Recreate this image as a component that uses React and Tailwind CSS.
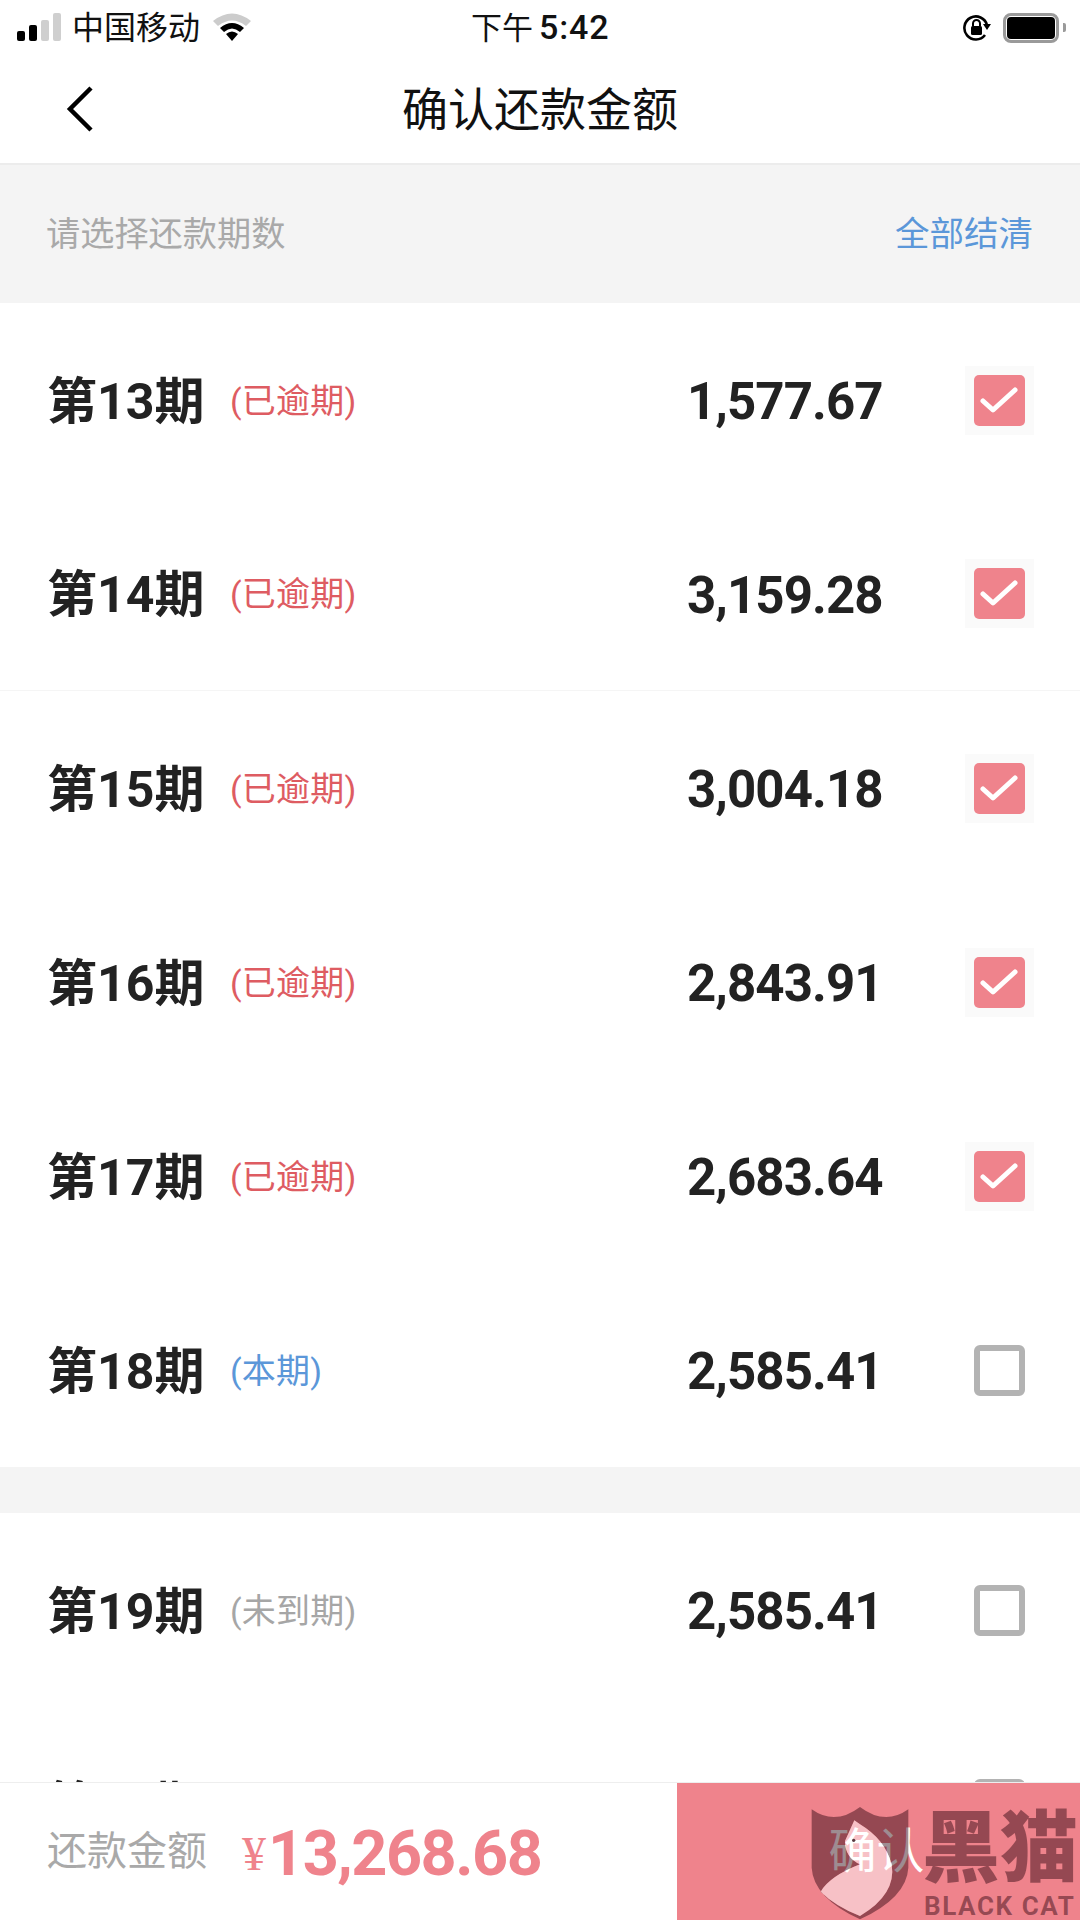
const FONT = 'font-["Roboto","Noto_Sans_CJK_SC",sans-serif]';

const rows = [
  { n: 13, tag: '(已逾期)', kind: 'late', amt: '1,577.67', on: true },
  { n: 14, tag: '(已逾期)', kind: 'late', amt: '3,159.28', on: true, line: true },
  { n: 15, tag: '(已逾期)', kind: 'late', amt: '3,004.18', on: true },
  { n: 16, tag: '(已逾期)', kind: 'late', amt: '2,843.91', on: true },
  { n: 17, tag: '(已逾期)', kind: 'late', amt: '2,683.64', on: true },
  { n: 18, tag: '(本期)', kind: 'now', amt: '2,585.41', on: false },
];
const rows2 = [
  { n: 19, tag: '(未到期)', kind: 'future', amt: '2,585.41', on: false },
  { n: 20, tag: '(未到期)', kind: 'future', amt: '2,585.41', on: false },
];

function Check({ on }) {
  if (!on) {
    return (
      <div className="w-[69px] h-[69px] flex items-center justify-center">
        <div className="w-[51px] h-[51px] rounded-[6px] border-[6px] border-[#b3b3b3] bg-white" />
      </div>
    );
  }
  return (
    <div className="w-[69px] h-[69px] flex items-center justify-center bg-[#fafafa]">
      <div className="w-[51px] h-[51px] rounded-[5px] bg-[#ef838c] flex items-center justify-center">
        <svg width="51" height="51" viewBox="0 0 51 51" fill="none">
          <path d="M9 26 L19 35 L41 15" stroke="#fff" strokeWidth="5" strokeLinecap="round" strokeLinejoin="round" />
        </svg>
      </div>
    </div>
  );
}

function Row({ r }) {
  const color = r.kind === 'late' ? 'text-[#de5c62]' : r.kind === 'now' ? 'text-[#5b97d9]' : 'text-[#a6a6a6]';
  return (
    <div className={`h-[194px] shrink-0 flex items-center pl-[47px] bg-white ${r.line ? 'border-b border-[#f5f5f5]' : ''}`}>
      <div className="w-[183px] shrink-0 mt-[3px] text-[50px] leading-none font-bold text-[#222222] whitespace-nowrap">第{r.n}期</div>
      <div className={`w-[457px] shrink-0 mt-[1px] text-[34px] leading-none ${color} whitespace-nowrap tracking-[0.2px]`}>{r.tag}</div>
      <div className="w-[278px] shrink-0 mt-[3px] text-[51px] leading-none font-bold text-[#222222] tracking-[-0.9px]">{r.amt}</div>
      <Check on={r.on} />
    </div>
  );
}

function StatusBar() {
  return (
    <div className="h-[55px] shrink-0 flex items-center justify-between bg-white relative">
      <div className="flex items-center">
        <div className="flex items-end gap-[4px] ml-[17px] h-[28px] mt-[-2px]">
          <div className="w-[8px] h-[10px] rounded-[2px] bg-black" />
          <div className="w-[8px] h-[16px] rounded-[2px] bg-black" />
          <div className="w-[8px] h-[21px] rounded-[2px] bg-[#cfcfcf]" />
          <div className="w-[8px] h-[28px] rounded-[2px] bg-[#cfcfcf]" />
        </div>
        <div className="ml-[11px] mt-[1px] text-[32px] leading-none text-[#111111]">中国移动</div>
        <svg className="ml-[12px] mt-[-2px]" width="40" height="30" viewBox="0 0 40 30">
          <path d="M1 9 Q20 -6 39 9 L34 14 Q20 3 6 14 Z" fill="#cccccc" />
          <path d="M8 16 Q20 6 32 16 L28 20 Q20 13 12 20 Z" fill="#000" />
          <path d="M14 22 Q20 17 26 22 L20 29 Z" fill="#000" />
        </svg>
      </div>
      <div className="absolute left-[471px] top-[9px] flex items-baseline leading-[36px] text-[#111111] whitespace-nowrap">
        <span className="text-[31px]">下午</span>
        <span className="ml-[6px] text-[34px] font-medium tracking-[0.9px]">5:42</span>
      </div>
      <div className="flex items-center">
        <svg className="ml-[-2px]" width="30" height="28" viewBox="0 0 30 28" fill="none">
          <path d="M23 21 A11.5 11.5 0 1 1 25 11" stroke="#000" strokeWidth="2.6" />
          <path d="M21 10 L29 10 L25 16 Z" fill="#000" />
          <rect x="9" y="12" width="11" height="9" rx="1.5" fill="#000" />
          <path d="M11 12 V9.5 A3.5 3.5 0 0 1 18 9.5 V12" stroke="#000" strokeWidth="2" />
        </svg>
        <div className="ml-[11px] w-[56px] h-[30px] rounded-[8px] border-[3px] border-[#9a9a9a] p-[1px]">
          <div className="w-full h-full rounded-[4px] bg-black" />
        </div>
        <div className="ml-[4px] mr-[14px] w-[3px] h-[9px] bg-[#9a9a9a] rounded-r-[2px]" />
      </div>
    </div>
  );
}

function Watermark() {
  return (
    <>
      <svg className="absolute left-[83px] top-[-22px]" width="320" height="160" viewBox="0 0 960 480">
        <path
          fillRule="evenodd"
          d="M155 145 Q225 195 300 138 Q375 195 445 145 L445 320 Q440 410 300 475 Q160 410 155 320 Z M283 178 L300 190 Q375 235 395 310 Q410 400 300 465 Q225 435 182 392 Q210 345 300 310 Q255 290 255 240 Z"
          fill="rgba(40,0,10,0.45)"
        />
        <path d="M283 178 L300 190 Q375 235 395 310 Q410 400 300 465 Q225 435 182 392 Q210 345 300 310 Q255 290 255 240 Z" fill="rgba(255,255,255,0.5)" />
        <circle cx="281" cy="238" r="5" fill="#5a3a40" />
      </svg>
      <div className="absolute left-[245px] top-[27px] text-[78px] leading-[80px] font-black text-[rgba(40,0,10,0.45)] whitespace-nowrap">黑猫</div>
      <div className="absolute left-[247px] top-[109px] text-[26px] leading-[28px] font-bold text-[rgba(40,0,10,0.45)] whitespace-nowrap tracking-[1.6px]">BLACK CAT</div>
    </>
  );
}

export default function App() {
  return (
    <div className={`w-[1080px] h-[1920px] flex flex-col overflow-hidden bg-white ${FONT}`}>
      <StatusBar />
      <div className="h-[110px] shrink-0 relative flex items-center justify-center border-b-2 border-[#ececec]">
        <svg className="absolute left-[64px] top-[30px]" width="32" height="48" viewBox="0 0 32 48" fill="none">
          <path d="M27 3 L6 24 L27 45" stroke="#000" strokeWidth="4.5" />
        </svg>
        <div className="mt-[2px] text-[46px] leading-none text-[#111111]">确认还款金额</div>
      </div>
      <div className="h-[138px] shrink-0 bg-[#f4f4f4] flex items-center justify-between pl-[46px] pr-[47px]">
        <div className="text-[34.2px] leading-none text-[#a9a9a9]">请选择还款期数</div>
        <div className="text-[34.5px] leading-none text-[#5b97d9]">全部结清</div>
      </div>
      <div className="flex-1 min-h-0 overflow-hidden flex flex-col">
        {rows.map((r) => <Row key={r.n} r={r} />)}
        <div className="h-[46px] shrink-0 bg-[#f4f4f4]" />
        {rows2.map((r) => <Row key={r.n} r={r} />)}
      </div>
      <div className="h-[138px] shrink-0 flex items-stretch border-t border-[#eeeeee] bg-white">
        <div className="w-[677px] shrink-0 flex items-center pl-[47px]">
          <div className="text-[40px] leading-none text-[#a9a9a9] w-[195px] shrink-0">还款金额</div>
          <div className="text-[48px] leading-none text-[#ef838c] font-['Liberation_Serif',serif] mt-1">¥</div>
          <div className="text-[63px] leading-none font-bold text-[#ef838c] ml-[2px] mt-[3px] tracking-[-1.5px]">13,268.68</div>
        </div>
        <div className="flex-1 relative bg-[#ef838c] flex items-center justify-center">
          <div className="text-[48px] leading-none text-white mr-[4px]">确认</div>
          <Watermark />
        </div>
      </div>
    </div>
  );
}
